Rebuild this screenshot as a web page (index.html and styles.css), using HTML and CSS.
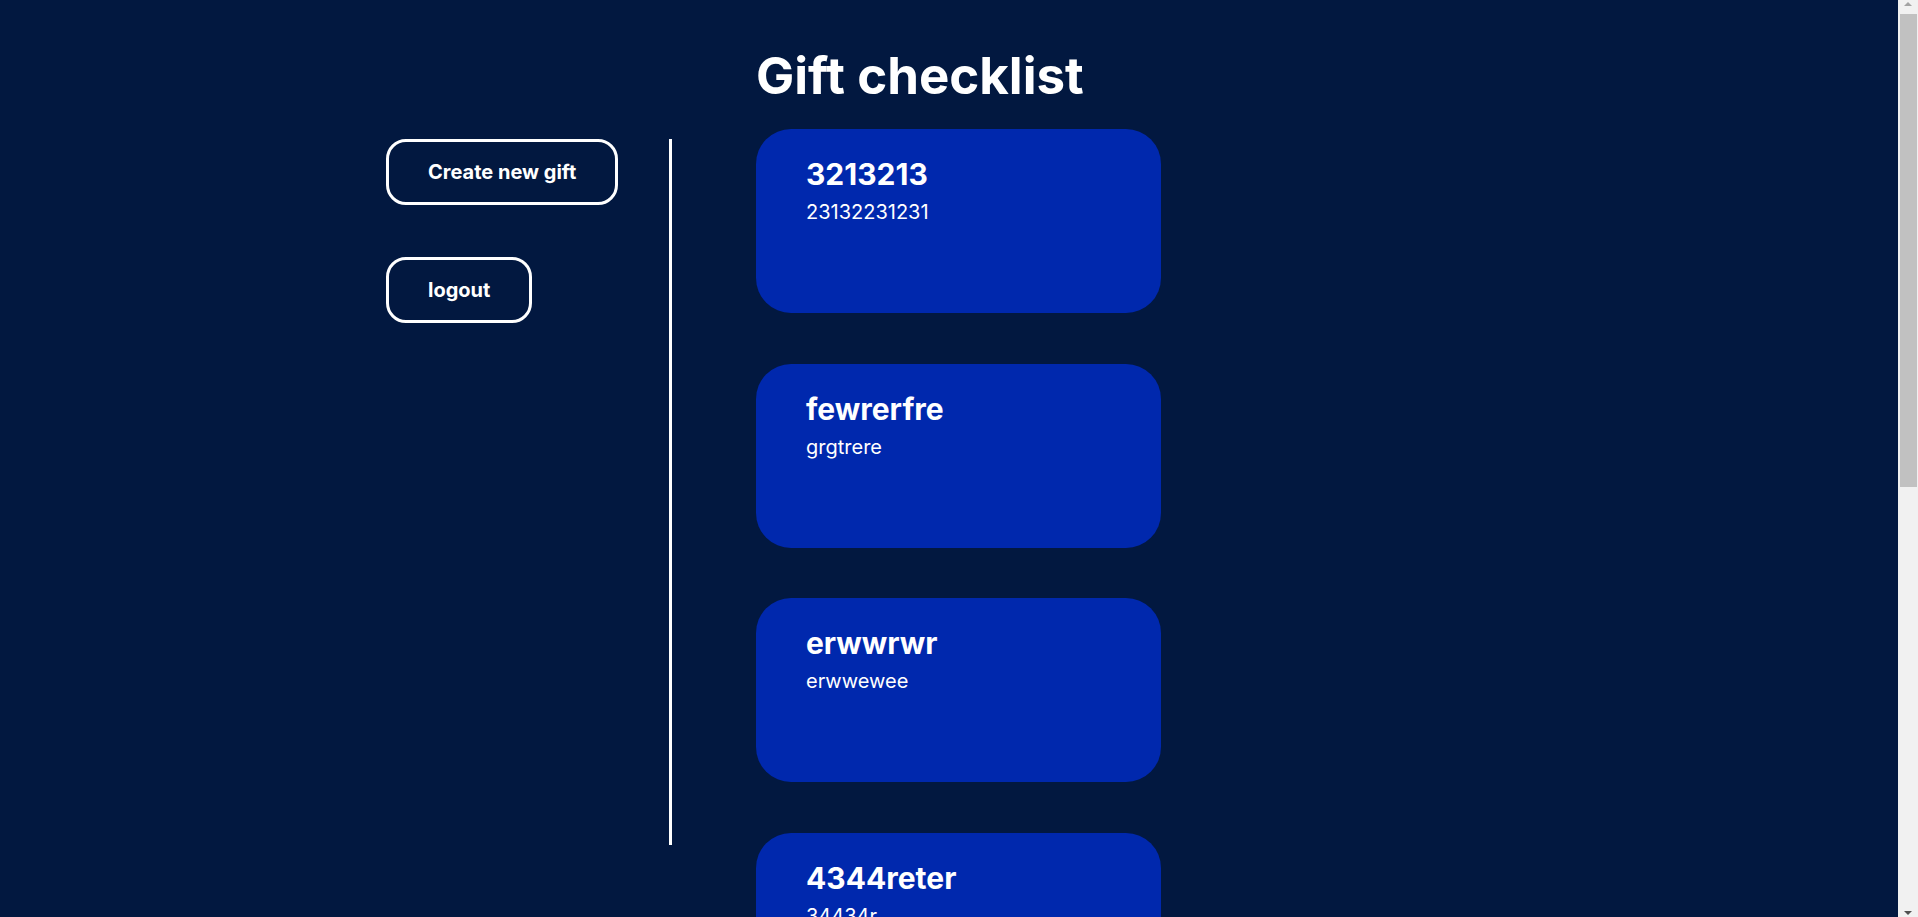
FILE: index.html
```html
<!DOCTYPE html>
<html lang="en">
<head>
<meta charset="utf-8">
<title>Gift checklist</title>
<link rel="stylesheet" href="styles.css">
</head>
<body>
<div class="layout">
  <aside class="sidebar">
    <button class="btn">Create new gift</button>
    <button class="btn">logout</button>
  </aside>
  <div class="divider"></div>
  <main class="main">
    <h1 class="title">Gift checklist</h1>
    <ul class="cards">
      <li class="card"><h2 class="card-title">3213213</h2><p class="card-text">23132231231</p></li>
      <li class="card"><h2 class="card-title">fewrerfre</h2><p class="card-text">grgtrere</p></li>
      <li class="card"><h2 class="card-title">erwwrwr</h2><p class="card-text">erwwewee</p></li>
      <li class="card"><h2 class="card-title">4344reter</h2><p class="card-text">34434r</p></li>
      <li class="card"><h2 class="card-title">rtetert</h2><p class="card-text">ertertre</p></li>
      <li class="card"><h2 class="card-title">gfdgdfg</h2><p class="card-text">dfgdfgd</p></li>
      <li class="card"><h2 class="card-title">ewqeqw</h2><p class="card-text">qweqwe</p></li>
    </ul>
  </main>
</div>
<div class="scrollbar" aria-hidden="true">
  <div class="sb-arrow sb-up"></div>
  <div class="sb-thumb"></div>
  <div class="sb-rest"></div>
  <div class="sb-arrow sb-down"></div>
</div>
</body>
</html>
```
FILE: styles.css
```css
html, body {
  margin: 0;
  padding: 0;
  background: #021840;
}
body {
  font-family: Inter, "Liberation Sans", sans-serif;
  color: #ffffff;
}
.layout {
  display: flex;
  align-items: flex-start;
  padding-left: 386px;
}
.sidebar {
  width: 283px;
  margin-top: 139px;
  display: flex;
  flex-direction: column;
  align-items: flex-start;
  gap: 52px;
}
.btn {
  box-sizing: border-box;
  height: 66px;
  padding: 0 39px;
  border: 3px solid #ffffff;
  border-radius: 20px;
  background: transparent;
  color: #ffffff;
  font-family: Inter, "Liberation Sans", sans-serif;
  font-size: 20px;
  font-weight: 700;
  cursor: pointer;
}
.divider {
  width: 3px;
  height: 706px;
  margin-top: 139px;
  background: #ffffff;
  flex-shrink: 0;
}
.main {
  margin-left: 84px;
  padding-top: 45px;
}
.title {
  margin: 0;
  font-size: 51px;
  line-height: 61px;
  font-weight: 700;
}
.cards {
  list-style: none;
  margin: 23px 0 0;
  padding: 0;
  display: flex;
  flex-direction: column;
  gap: 50.5px;
}
.card {
  box-sizing: border-box;
  width: 405px;
  height: 184px;
  padding: 27px 50px;
  border-radius: 35px;
  background: #0028ad;
}
.card-title {
  margin: 0;
  font-size: 30px;
  line-height: 36px;
  font-weight: 700;
}
.card-text {
  margin: 8px 0 0;
  font-size: 20px;
  line-height: 24px;
  font-weight: 400;
}

/* visual replica of the browser's scrollbar */
.scrollbar {
  position: fixed;
  top: 0;
  right: 0;
  width: 20px;
  height: 100vh;
  background: #f1f1f1;
  display: flex;
  flex-direction: column;
  align-items: center;
}
.sb-arrow {
  width: 0;
  height: 0;
  border-left: 4px solid transparent;
  border-right: 4px solid transparent;
  flex-shrink: 0;
}
.sb-up {
  margin-top: 2px;
  border-bottom: 4px solid #a3a3a3;
}
.sb-down {
  margin-bottom: 2px;
  border-top: 4px solid #505050;
}
.sb-thumb {
  align-self: stretch;
  margin: 8px 1px 0 2px;
  height: 473px;
  background: #c1c1c1;
  flex-shrink: 0;
}
.sb-rest {
  flex: 1;
}
```
